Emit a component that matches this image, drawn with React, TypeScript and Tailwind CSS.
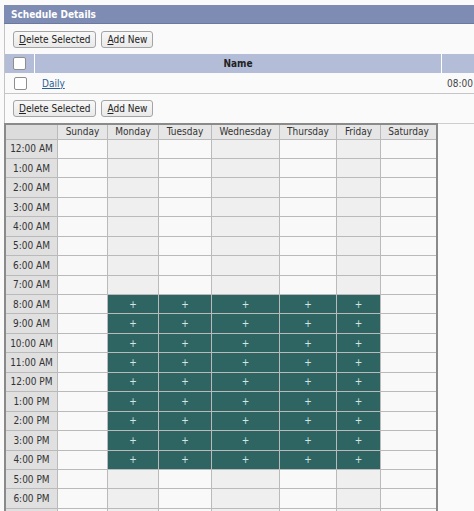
import React from 'react';

const days = ['Sunday', 'Monday', 'Tuesday', 'Wednesday', 'Thursday', 'Friday', 'Saturday'];

// zebra shading per day column (Mon / Wed / Fri are greyed)
const dayShade = ['bg-[#f9f9f9]', 'bg-[#efefef]', 'bg-[#f9f9f9]', 'bg-[#efefef]', 'bg-[#f9f9f9]', 'bg-[#efefef]', 'bg-[#f9f9f9]'];

const hours = Array.from({ length: 24 }, (_, h) => {
  const label = h % 12 === 0 ? 12 : h % 12;
  return `${label}:00 ${h < 12 ? 'AM' : 'PM'}`;
});

// weekdays 8:00 AM through 4:00 PM
function isActive(day: number, hour: number) {
  return day >= 1 && day <= 5 && hour >= 8 && hour <= 16;
}

function Button({ hotkey, rest }: { hotkey: string; rest: string }) {
  return (
    <button className="h-[17px] px-[5px] rounded-[3px] border border-[#a4a4a4] bg-gradient-to-b from-[#f8f8f8] to-[#e9e9e9] text-[#222] leading-none">
      <span className="underline">{hotkey}</span>
      {rest}
    </button>
  );
}

function Checkbox() {
  return <span className="block w-[13px] h-[13px] rounded-[2px] border border-[#8e8e8e] bg-white" />;
}

function ButtonBar() {
  return (
    <div className="flex gap-[5px] pl-[8px]">
      <Button hotkey="D" rest="elete Selected" />
      <Button hotkey="A" rest="dd New" />
    </div>
  );
}

export default function App() {
  return (
    <div
      className="w-[474px] h-[511px] overflow-hidden bg-[#fafafa] text-[10px] text-[#333]"
      style={{ fontFamily: "'DejaVu Sans Condensed', 'DejaVu Sans', sans-serif", fontStretch: 'semi-condensed' }}
    >
      <div className="pt-[5px] pl-[4px] w-[700px]">
        {/* Section title */}
        <div className="h-[19px] bg-[#7e8cb4] border-b border-[#6a79a2] pl-[7px] flex items-center text-white font-bold">
          Schedule Details
        </div>

        <div className="border-l border-[#c4c4c4] pt-[7px] pb-[6px]">
          <ButtonBar />

          {/* Schedules list */}
          <div className="mt-[6px] w-[695px]">
            <div className="flex h-[19px] bg-[#b4bdd7] font-bold text-[#222]">
              <div className="w-[30px] flex items-center justify-center border-r border-white">
                <Checkbox />
              </div>
              <div className="w-[407px] flex items-center justify-center border-r border-white">Name</div>
              <div className="flex-1" />
            </div>
            <div className="flex h-[21px] border-b border-[#c6c6c6]">
              <div className="w-[30px] flex items-center justify-center">
                <Checkbox />
              </div>
              <div className="w-[407px] flex items-center pl-[7px]">
                <a className="text-[#2d5e93] underline">Daily</a>
              </div>
              <div className="flex-1 flex items-center pl-[5px] text-[#444]">08:00 AM - 05:00 PM</div>
            </div>
          </div>

          <div className="mt-[6px]">
            <ButtonBar />
          </div>
        </div>

        {/* Weekly hour grid */}
        <div className="flex">
          <div className="w-[434px] border-2 border-[#8a8a8a] bg-[#bababa] grid grid-cols-[51px_49px_50px_52px_67px_56px_43px_55px] grid-rows-[13.5px] auto-rows-[18.45px] gap-px">
            <div className="bg-[#dcdcdc]" />
            {days.map((d) => (
              <div key={d} className="bg-[#e6e6e6] flex items-center justify-center leading-none">
                {d}
              </div>
            ))}
            {hours.map((label, h) => (
              <React.Fragment key={label}>
                <div className="bg-[#e0e0e0] flex items-center justify-center">{label}</div>
                {days.map((d, i) =>
                  isActive(i, h) ? (
                    <div key={d} className="bg-[#2e6563] text-[#d6e6e4] flex items-center justify-center">
                      +
                    </div>
                  ) : (
                    <div key={d} className={dayShade[i]} />
                  )
                )}
              </React.Fragment>
            ))}
          </div>
          <div className="flex-1 border-t border-[#cdcdcd]" />
        </div>
      </div>
    </div>
  );
}
